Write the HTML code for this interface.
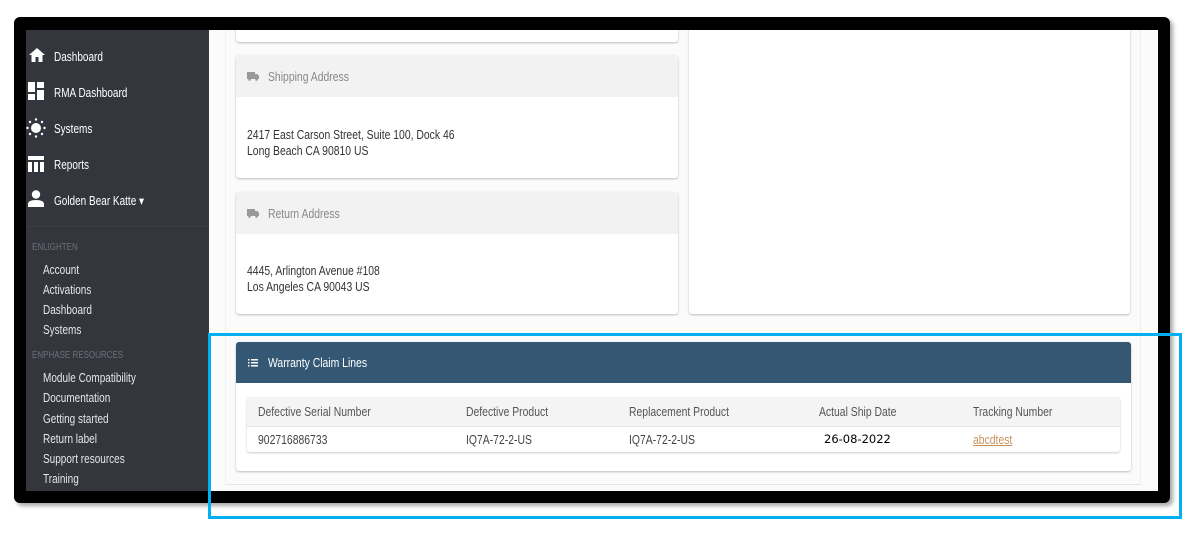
<!DOCTYPE html>
<html><head><meta charset="utf-8"><style>
*{box-sizing:border-box;margin:0;padding:0}
body{width:1192px;height:536px;background:#fff;position:relative;overflow:hidden;font-family:"Liberation Sans",sans-serif;font-size:12px;color:#333}
.n{display:inline-block;transform:scaleX(.8);transform-origin:0 0;white-space:nowrap}
.frame{position:absolute;left:14px;top:17px;width:1156px;height:486px;background:#000;border-radius:6px;box-shadow:3px 3px 4px rgba(0,0,0,.35)}
.side{position:absolute;left:26px;top:30px;width:183px;height:461px;background:#33363d}
.main{position:absolute;left:209px;top:30px;width:949px;height:461px;background:#fbfbfb;overflow:hidden}
.nav{position:absolute;left:0;color:#fff;font-size:12.5px}
.nav svg{position:absolute;left:2px;top:-3px}
.nav span{position:absolute;left:28px;top:0;white-space:nowrap}
.sec{position:absolute;left:6px;color:#6b6f76;font-size:10px}
.sub{position:absolute;left:17px;color:#e6e6e6;font-size:12.5px}
.card{position:absolute;background:#fff;border-radius:3px;box-shadow:0 1px 2px rgba(0,0,0,.25)}
.ch{height:42px;background:#f2f2f2;color:#888;font-size:13px;padding:14px 0 0 32px;position:relative;border-radius:3px 3px 0 0}
.ch svg{position:absolute;left:11px;top:17px}
.addr{position:absolute;left:11px;font-size:13px;color:#333;line-height:16px}
.blue{position:absolute;left:208px;top:333px;width:974px;height:186px;border:3px solid #00b0f0}
.th span,.tr span{position:absolute;top:7px;font-size:13px}
</style></head><body>
<div class="frame"></div>
<div class="side">
 <div class="nav" style="top:20px"><svg width="18" height="16" viewBox="0 0 18 16"><path d="M9 1L1 8h2.5v7h4v-5h3v5h4V8H17z" fill="#fff"/></svg><span class="n">Dashboard</span></div>
 <div class="nav" style="top:56px"><svg width="16" height="18" viewBox="0 0 16 18" style="top:-4px"><rect x="0" y="0" width="7" height="10" fill="#fff"/><rect x="9" y="0" width="7" height="6" fill="#fff"/><rect x="0" y="12" width="7" height="6" fill="#fff"/><rect x="9" y="8" width="7" height="10" fill="#fff"/></svg><span class="n">RMA Dashboard</span></div>
 <div class="nav" style="top:92px"><svg width="20" height="20" viewBox="0 0 20 20" style="left:0;top:-4px"><circle cx="10" cy="10" r="5" fill="#fff"/><g fill="#fff"><circle cx="10" cy="1.5" r="1.2"/><circle cx="10" cy="18.5" r="1.2"/><circle cx="1.5" cy="10" r="1.2"/><circle cx="18.5" cy="10" r="1.2"/><circle cx="4" cy="4" r="1.2"/><circle cx="16" cy="4" r="1.2"/><circle cx="4" cy="16" r="1.2"/><circle cx="16" cy="16" r="1.2"/></g></svg><span class="n">Systems</span></div>
 <div class="nav" style="top:128px"><svg width="16" height="16" viewBox="0 0 16 16" style="top:-2px"><rect x="0" y="0" width="16" height="4" fill="#fff"/><rect x="0" y="6" width="4" height="10" fill="#fff"/><rect x="6" y="6" width="4" height="10" fill="#fff"/><rect x="12" y="6" width="4" height="10" fill="#fff"/></svg><span class="n">Reports</span></div>
 <div class="nav" style="top:163px"><svg width="16" height="17" viewBox="0 0 16 17" style="top:-3px"><circle cx="8" cy="4.5" r="4.2" fill="#fff"/><path d="M0 17v-3c0-2.5 3-4 8-4s8 1.5 8 4v3z" fill="#fff"/></svg><span class="n">Golden Bear Katte &#9662;</span></div>
 <div style="position:absolute;left:0;top:196px;width:183px;height:1px;background:#3a3d44"></div>
 <div class="sec n" style="top:212px">ENLIGHTEN</div>
 <div class="sub n" style="top:233px">Account</div>
 <div class="sub n" style="top:253px">Activations</div>
 <div class="sub n" style="top:273px">Dashboard</div>
 <div class="sub n" style="top:293px">Systems</div>
 <div class="sec n" style="top:320px">ENPHASE RESOURCES</div>
 <div class="sub n" style="top:341px">Module Compatibility</div>
 <div class="sub n" style="top:361px">Documentation</div>
 <div class="sub n" style="top:382px">Getting started</div>
 <div class="sub n" style="top:402px">Return label</div>
 <div class="sub n" style="top:422px">Support resources</div>
 <div class="sub n" style="top:442px">Training</div>
</div>
<div class="main">
 <div style="position:absolute;left:16px;top:-2px;width:916px;height:457px;border-right:1px solid #eee;border-bottom:1px solid #e6e6e6;border-left:1px solid #f0f0f0"></div>
 <div class="card" style="left:27px;top:-4px;width:442px;height:16px"></div>
 <div class="card" style="left:27px;top:25px;width:442px;height:123px"><div class="ch"><svg width="12" height="9" viewBox="0 0 12 9"><rect x="0" y="0" width="8" height="7" fill="#999"/><path d="M8 2h2.5l1.5 2v3H8z" fill="#999"/><circle cx="2.5" cy="7.5" r="1.3" fill="#999"/><circle cx="9.5" cy="7.5" r="1.3" fill="#999"/></svg><span class="n">Shipping Address</span></div><div class="addr" style="top:72px"><span class="n">2417 East Carson Street, Suite 100, Dock 46</span><br><span class="n">Long Beach CA 90810 US</span></div></div>
 <div class="card" style="left:27px;top:162px;width:442px;height:122px"><div class="ch"><svg width="12" height="9" viewBox="0 0 12 9"><rect x="0" y="0" width="8" height="7" fill="#999"/><path d="M8 2h2.5l1.5 2v3H8z" fill="#999"/><circle cx="2.5" cy="7.5" r="1.3" fill="#999"/><circle cx="9.5" cy="7.5" r="1.3" fill="#999"/></svg><span class="n">Return Address</span></div><div class="addr" style="top:71px"><span class="n">4445, Arlington Avenue #108</span><br><span class="n">Los Angeles CA 90043 US</span></div></div>
 <div class="card" style="left:480px;top:-4px;width:441px;height:288px"></div>
 <div class="card" style="left:27px;top:312px;width:895px;height:129px">
  <div style="height:41px;background:#345873;color:#fff;font-size:13px;padding:13px 0 0 32px;position:relative;border-radius:3px 3px 0 0"><svg width="10" height="8" viewBox="0 0 10 8" style="position:absolute;left:12px;top:17px"><g fill="#fff"><rect x="0" y="0" width="1.5" height="1.5"/><rect x="0" y="3" width="1.5" height="1.5"/><rect x="0" y="6" width="1.5" height="1.5"/><rect x="3" y="0" width="7" height="1.5"/><rect x="3" y="3" width="7" height="1.5"/><rect x="3" y="6" width="7" height="1.5"/></g></svg><span class="n">Warranty Claim Lines</span></div>
  <div style="position:absolute;left:11px;top:55px;width:873px;height:55px;border-radius:3px;box-shadow:0 1px 2px rgba(0,0,0,.2);background:#fff">
   <div class="th" style="height:30px;background:#f4f4f4;border-bottom:1px solid #e4e4e4;position:relative;color:#555">
    <span class="n" style="left:11px">Defective Serial Number</span>
    <span class="n" style="left:219px">Defective Product</span>
    <span class="n" style="left:382px">Replacement Product</span>
    <span class="n" style="left:572px">Actual Ship Date</span>
    <span class="n" style="left:726px">Tracking Number</span>
   </div>
   <div class="tr" style="position:relative;color:#444">
    <span class="n" style="left:11px;top:5px">902716886733</span>
    <span class="n" style="left:219px;top:5px">IQ7A-72-2-US</span>
    <span class="n" style="left:382px;top:5px">IQ7A-72-2-US</span>
    <span style="left:577px;top:5px;color:#000;font-family:'DejaVu Sans',sans-serif;font-size:11.5px">26-08-2022</span>
    <span class="n" style="left:726px;top:5px;color:#c8935a;text-decoration:underline">abcdtest</span>
   </div>
  </div>
 </div>
</div>
<div class="blue"></div>
</body></html>
